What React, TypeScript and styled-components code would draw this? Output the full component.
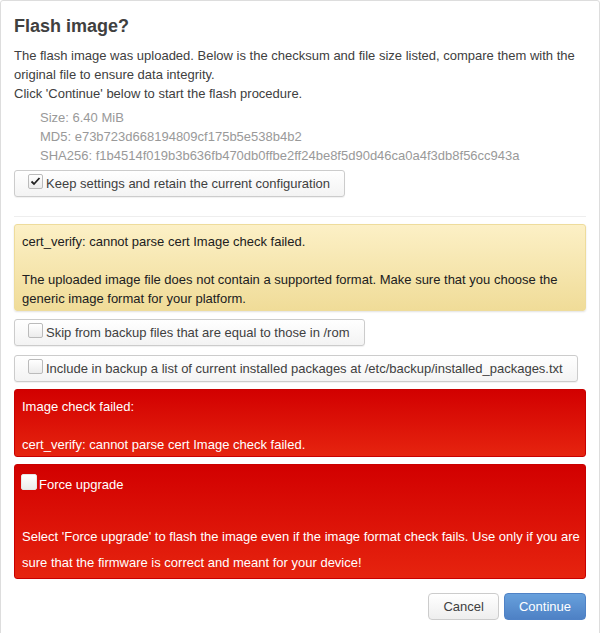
import React from 'react';
import styled, { createGlobalStyle } from 'styled-components';

const GlobalStyle = createGlobalStyle`
  html, body {
    margin: 0;
    padding: 0;
    background: #fff;
  }
  body {
    font-family: "Liberation Sans", Arial, Helvetica, sans-serif;
    font-size: 13px;
    color: #404040;
  }
`;

const Modal = styled.div`
  box-sizing: border-box;
  width: 600px;
  min-height: 640px;
  border: 1px solid #ddd;
  border-radius: 3px;
  padding: 13px 13px 14px;
  background: #fff;
`;

const Title = styled.h4`
  margin: 0 0 8px;
  font-size: 18px;
  line-height: 24px;
  font-weight: bold;
  color: #404040;
`;

const Text = styled.p`
  margin: 0;
  line-height: 19px;
`;

const Info = styled.ul`
  list-style: none;
  margin: 5px 0 5px 26px;
  padding: 0;
  color: #999;
  line-height: 19px;
`;

const OptionLabel = styled.label`
  box-sizing: border-box;
  display: block;
  height: 27px;
  padding: 3px 14px 0;
  border: 1px solid #ccc;
  border-radius: 3px;
  background: linear-gradient(#fff, #f3f3f3);
  box-shadow: 0 1px 1px rgba(0, 0, 0, 0.06);
  line-height: 19px;
  color: #404040;
  white-space: nowrap;
`;

const OptionRow = styled.div<{ $gap?: number }>`
  display: flex;
  align-items: flex-start;
  margin-top: ${(p) => p.$gap ?? 8}px;
`;

const Block = styled.div<{ $gap?: number }>`
  margin-top: ${(p) => p.$gap ?? 7}px;
`;

const Box = styled.span<{ $red?: boolean }>`
  box-sizing: border-box;
  display: inline-block;
  vertical-align: top;
  width: ${(p) => (p.$red ? 16 : 15)}px;
  height: ${(p) => (p.$red ? 16 : 15)}px;
  margin: ${(p) => (p.$red ? '2px 2px 0 -1px' : '0 3px 0 -1px')};
  border: 1px solid ${(p) => (p.$red ? '#e6e6e6' : '#bbb')};
  border-radius: 2px;
  background: linear-gradient(#fff, #ececec);
  position: relative;
`;

const Check = styled.svg`
  position: absolute;
  left: 1px;
  top: 1px;
`;

const Divider = styled.hr`
  border: 0;
  border-top: 1px solid #eee;
  margin: 19px 0 7px;
`;

const Alert = styled.div<{ $tone: 'warning' | 'danger'; $lh?: number }>`
  border-radius: 3px;
  padding: 7px 3px 2px 7px;
  line-height: ${(p) => p.$lh ?? 19}px;
  ${(p) =>
    p.$tone === 'warning'
      ? `
    background: linear-gradient(#fcf0c6, #f0dc98);
    border: 1px solid #eedc9c;
    color: #202020;
    box-shadow: 0 1px 2px rgba(0,0,0,0.12);
  `
      : `
    background: linear-gradient(#d20000, #e6240f);
    border: 1px solid #c80000;
    color: #fff;
  `}
`;

const Footer = styled.div`
  display: flex;
  justify-content: flex-end;
  gap: 5px;
  margin-top: 14px;
`;

const Button = styled.button<{ $primary?: boolean }>`
  box-sizing: border-box;
  height: 27px;
  padding: 0 14px;
  border-radius: 4px;
  font-family: inherit;
  font-size: 13px;
  cursor: pointer;
  ${(p) =>
    p.$primary
      ? `
    color: #fff;
    border: 1px solid #4f82c6;
    background: linear-gradient(#67a0dc, #4e81c5);
  `
      : `
    color: #404040;
    border: 1px solid #ccc;
    background: linear-gradient(#fff, #eee);
  `}
`;

const Checkbox: React.FC<{ checked?: boolean; red?: boolean }> = ({ checked, red }) => (
  <Box $red={red}>
    {checked && (
      <Check width="11" height="11" viewBox="0 0 11 11">
        <path d="M1.5 5.5 L4 8 L9.5 2" fill="none" stroke="#222" strokeWidth="1.8" />
      </Check>
    )}
  </Box>
);

const App: React.FC = () => (
  <>
    <GlobalStyle />
    <Modal>
      <Title>Flash image?</Title>
      <Text>
        The flash image was uploaded. Below is the checksum and file size listed, compare them with the
        original file to ensure data integrity.
        <br />
        Click 'Continue' below to start the flash procedure.
      </Text>
      <Info>
        <li>Size: 6.40 MiB</li>
        <li>MD5: e73b723d668194809cf175b5e538b4b2</li>
        <li>SHA256: f1b4514f019b3b636fb470db0ffbe2ff24be8f5d90d46ca0a4f3db8f56cc943a</li>
      </Info>
      <OptionRow $gap={0}>
        <OptionLabel>
          <Checkbox checked />
          Keep settings and retain the current configuration
        </OptionLabel>
      </OptionRow>
      <Divider />
      <Alert $tone="warning">
        cert_verify: cannot parse cert Image check failed.
        <br />
        <br />
        The uploaded image file does not contain a supported format. Make sure that you choose the
        generic image format for your platform.
      </Alert>
      <OptionRow>
        <OptionLabel>
          <Checkbox />
          Skip from backup files that are equal to those in /rom
        </OptionLabel>
      </OptionRow>
      <OptionRow $gap={9}>
        <OptionLabel>
          <Checkbox />
          Include in backup a list of current installed packages at /etc/backup/installed_packages.txt
        </OptionLabel>
      </OptionRow>
      <Block>
        <Alert $tone="danger">
          Image check failed:
          <br />
          <br />
          cert_verify: cannot parse cert Image check failed.
        </Alert>
      </Block>
      <Block>
        <Alert $tone="danger" $lh={26}>
          <Checkbox red />
          Force upgrade
          <br />
          <br />
          Select 'Force upgrade' to flash the image even if the image format check fails. Use only if you are
          sure that the firmware is correct and meant for your device!
        </Alert>
      </Block>
      <Footer>
        <Button>Cancel</Button>
        <Button $primary>Continue</Button>
      </Footer>
    </Modal>
  </>
);

export default App;
